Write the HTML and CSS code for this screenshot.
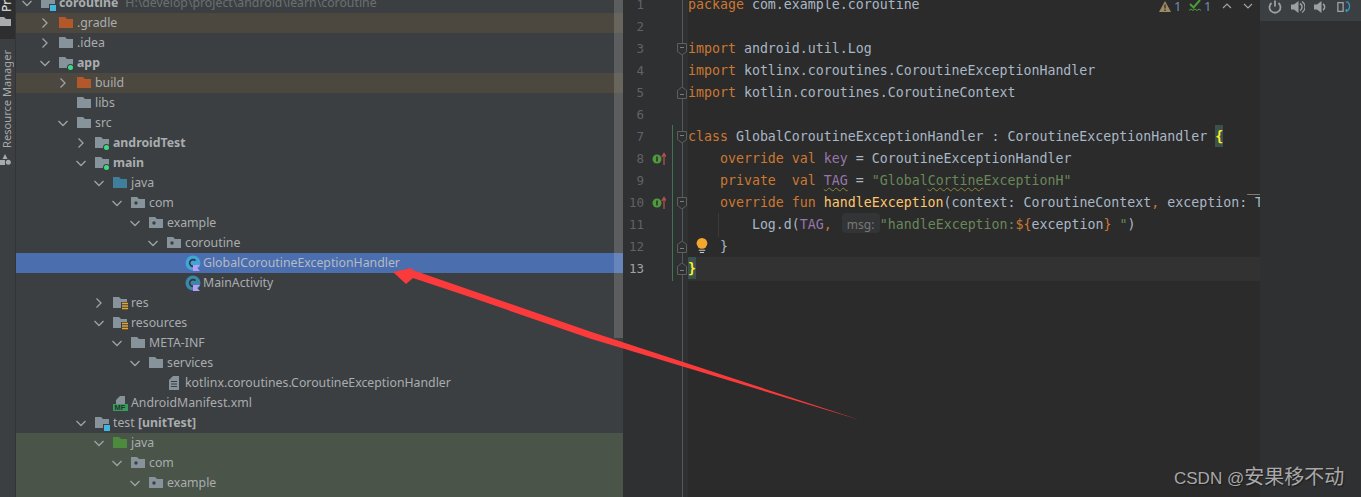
FILE: index.html
```html
<!DOCTYPE html>
<html lang="en">
<head>
<meta charset="utf-8">
<title>Coroutine project</title>
<link rel="stylesheet" href="styles.css">
</head>
<body>
<svg class="defs" aria-hidden="true">
  <symbol id="right" viewBox="0 0 10 10"><path d="M2.5.5 7 5 2.5 9.5" fill="none" stroke="#a0a3a5" stroke-width="1.3"/></symbol>
  <symbol id="down" viewBox="0 0 10 10"><path d="M.5 3 5 7.5 9.5 3" fill="none" stroke="#a0a3a5" stroke-width="1.3"/></symbol>
  <symbol id="folder" viewBox="0 0 16 16"><path d="M0 2h6l2 2h6v9H0z" fill="currentColor"/></symbol>
  <symbol id="module" viewBox="0 0 16 16"><path d="M0 2h6l2 2h6v9H0z" fill="#87939a"/><circle cx="11.5" cy="12.5" r="3.5" fill="#3c3f41"/><circle cx="11.5" cy="12.5" r="2.5" fill="#3ddc84"/></symbol>
  <symbol id="root" viewBox="0 0 16 16"><path d="M0 2h6l2 2h6v9H0z" fill="#87939a"/><path d="M8 9h8v7H8z" fill="#3c3f41"/><path d="M9 10h6v6H9z" fill="#40b6e0"/></symbol>
  <symbol id="package" viewBox="0 0 16 16"><path d="M0 2h6l2 2h6v9H0z" fill="#87939a"/><circle cx="5" cy="8" r="1.7" fill="#3c3f41"/></symbol>
  <symbol id="resfolder" viewBox="0 0 16 16"><path d="M0 2h6l2 2h6v9H0z" fill="#87939a"/><path d="M8 7h8v9H8z" fill="#3c3f41"/><path d="M9 8.500h6M9 11h6M9 13.500h6" stroke="#e8a52c" stroke-width="1.400"/></symbol>
  <symbol id="doc" viewBox="0 0 16 16"><path d="M6 1h6v14H2V5z" fill="#87939a"/><path d="M4 6.500h6M4 9h6M4 11.500h6" stroke="#3c3f41"/></symbol>
  <symbol id="manifest" viewBox="0 0 16 16"><path d="M7 1h5v8H3V5z" fill="#87939a"/><path d="M0 9h15v7H0z" fill="#389a5f"/><text x="1.500" y="15.300" class="mf">MF</text></symbol>
  <symbol id="kclass" viewBox="0 0 16 16"><circle cx="8" cy="8" r="7.500" fill="currentColor"/><path d="M10.500 5.600a3.400 3.400 0 1 0 0 4.800" fill="none" stroke="#2f3a40" stroke-width="1.600"/><path d="M8 10h7l-3 3 3 3H8z" fill="#b99bf8"/></symbol>
  <symbol id="fold-open" viewBox="0 0 10 14"><path d="M.5 1.500h9v8L5 13 .5 9.500z" fill="#2f3032" stroke="#5e6060"/><path d="M3 5.500h4" stroke="#7a7c7e"/></symbol>
  <symbol id="fold-close" viewBox="0 0 10 14"><path d="M.5 12.500h9v-8L5 1 .5 4.500z" fill="#2f3032" stroke="#5e6060"/><path d="M3 8.500h4" stroke="#7a7c7e"/></symbol>
  <symbol id="impl" viewBox="0 0 14 14"><circle cx="5" cy="7" r="4.500" fill="#4e9a3c"/><path d="M5 4.500v5" stroke="#2b2b2b" stroke-width="1.500"/><path d="M12 13V2M9.800 5 12 1.500 14.200 5" fill="none" stroke="#b5524c" stroke-width="1.300"/></symbol>
</svg>

<div class="app">
  <nav class="rail">
    <div class="rail-tab">
      <svg class="rail-folder" viewBox="0 0 11 9"><path d="M0 0h4l2 2h5v7H0z"/></svg>
      <span class="rail-label active">Pr</span>
    </div>
    <div class="rail-item">
      <svg class="rail-res" viewBox="0 0 11 11"><path d="M5 0l2.500 5h-5z"/><path d="M0 6h5v5H0z"/><circle cx="8.300" cy="8.300" r="2.500"/></svg>
      <span class="rail-label">Resource Manager</span>
    </div>
  </nav>

  <section class="tree">
    <div class="tree-rows">
      <div class="row d0"><svg class="chev"><use href="#down"/></svg><svg class="ico"><use href="#root"/></svg><b>coroutine</b><span class="path">H:\develop\project\android\learn\coroutine</span></div>
      <div class="row d1 excluded"><svg class="chev"><use href="#right"/></svg><svg class="ico orange"><use href="#folder"/></svg><span>.gradle</span></div>
      <div class="row d1"><svg class="chev"><use href="#right"/></svg><svg class="ico gray"><use href="#folder"/></svg><span>.idea</span></div>
      <div class="row d1"><svg class="chev"><use href="#down"/></svg><svg class="ico"><use href="#module"/></svg><b>app</b></div>
      <div class="row d2 excluded"><svg class="chev"><use href="#right"/></svg><svg class="ico orange"><use href="#folder"/></svg><span>build</span></div>
      <div class="row d2"><i class="chev"></i><svg class="ico gray"><use href="#folder"/></svg><span>libs</span></div>
      <div class="row d2"><svg class="chev"><use href="#down"/></svg><svg class="ico gray"><use href="#folder"/></svg><span>src</span></div>
      <div class="row d3"><svg class="chev"><use href="#right"/></svg><svg class="ico"><use href="#module"/></svg><b>androidTest</b></div>
      <div class="row d3"><svg class="chev"><use href="#down"/></svg><svg class="ico"><use href="#module"/></svg><b>main</b></div>
      <div class="row d4"><svg class="chev"><use href="#down"/></svg><svg class="ico teal"><use href="#folder"/></svg><span>java</span></div>
      <div class="row d5"><svg class="chev"><use href="#down"/></svg><svg class="ico"><use href="#package"/></svg><span>com</span></div>
      <div class="row d6"><svg class="chev"><use href="#down"/></svg><svg class="ico"><use href="#package"/></svg><span>example</span></div>
      <div class="row d7"><svg class="chev"><use href="#down"/></svg><svg class="ico"><use href="#package"/></svg><span>coroutine</span></div>
      <div class="row d8 selected"><i class="chev"></i><svg class="ico kbright"><use href="#kclass"/></svg><span>GlobalCoroutineExceptionHandler</span></div>
      <div class="row d8"><i class="chev"></i><svg class="ico kdim"><use href="#kclass"/></svg><span>MainActivity</span></div>
      <div class="row d4"><svg class="chev"><use href="#right"/></svg><svg class="ico"><use href="#resfolder"/></svg><span>res</span></div>
      <div class="row d4"><svg class="chev"><use href="#down"/></svg><svg class="ico"><use href="#resfolder"/></svg><span>resources</span></div>
      <div class="row d5"><svg class="chev"><use href="#down"/></svg><svg class="ico gray"><use href="#folder"/></svg><span>META-INF</span></div>
      <div class="row d6"><svg class="chev"><use href="#down"/></svg><svg class="ico gray"><use href="#folder"/></svg><span>services</span></div>
      <div class="row d7"><i class="chev"></i><svg class="ico"><use href="#doc"/></svg><span>kotlinx.coroutines.CoroutineExceptionHandler</span></div>
      <div class="row d4"><i class="chev"></i><svg class="ico"><use href="#manifest"/></svg><span>AndroidManifest.xml</span></div>
      <div class="row d3"><svg class="chev"><use href="#down"/></svg><svg class="ico"><use href="#root"/></svg><span>test <b>[unitTest]</b></span></div>
      <div class="row d4 tests"><svg class="chev"><use href="#down"/></svg><svg class="ico green"><use href="#folder"/></svg><span>java</span></div>
      <div class="row d5 tests"><svg class="chev"><use href="#down"/></svg><svg class="ico"><use href="#package"/></svg><span>com</span></div>
      <div class="row d6 tests"><svg class="chev"><use href="#down"/></svg><svg class="ico"><use href="#package"/></svg><span>example</span></div>
      <div class="row d7 tests"></div>
    </div>
    <div class="scrollbar"></div>
  </section>

  <main class="editor">
    <div class="ln"><span class="num">1</span><span class="marks"></span><span class="fold"></span><code class="code"><span class="kw">package</span> com.example.coroutine</code></div>
    <div class="ln"><span class="num">2</span><span class="marks"></span><span class="fold"></span><code class="code"></code></div>
    <div class="ln"><span class="num">3</span><span class="marks"></span><span class="fold"><svg class="fold-ico"><use href="#fold-open"/></svg></span><code class="code"><span class="kw">import</span> android.util.Log</code></div>
    <div class="ln"><span class="num">4</span><span class="marks"></span><span class="fold"></span><code class="code"><span class="kw">import</span> kotlinx.coroutines.CoroutineExceptionHandler</code></div>
    <div class="ln"><span class="num">5</span><span class="marks"></span><span class="fold"><svg class="fold-ico"><use href="#fold-close"/></svg></span><code class="code"><span class="kw">import</span> kotlin.coroutines.CoroutineContext</code></div>
    <div class="ln"><span class="num">6</span><span class="marks"></span><span class="fold"></span><code class="code"></code></div>
    <div class="ln changed"><span class="num">7</span><span class="marks"></span><span class="fold"><svg class="fold-ico"><use href="#fold-open"/></svg></span><code class="code"><span class="kw">class</span> GlobalCoroutineExceptionHandler : CoroutineExceptionHandler <span class="brace">{</span></code></div>
    <div class="ln changed"><span class="num">8</span><span class="marks"><svg class="impl"><use href="#impl"/></svg></span><span class="fold"></span><code class="code">    <span class="kw">override val</span> <span class="prop">key</span> = CoroutineExceptionHandler</code></div>
    <div class="ln changed"><span class="num">9</span><span class="marks"></span><span class="fold"></span><code class="code">    <span class="kw">private  val</span> <span class="prop wavy">TAG</span> = <span class="str">"Global<span class="wavy">Cortine</span>ExceptionH"</span></code></div>
    <div class="ln changed"><span class="num">10</span><span class="marks"><svg class="impl"><use href="#impl"/></svg></span><span class="fold"><svg class="fold-ico"><use href="#fold-open"/></svg></span><code class="code">    <span class="kw">override fun</span> <span class="fn">handleException</span>(context: CoroutineContext<span class="kw">,</span> exception:<span class="over"> Throwable</span>) {</code></div>
    <div class="ln changed"><span class="num">11</span><span class="marks"></span><span class="fold"></span><code class="code guide">        Log.d(<span class="prop">TAG</span><span class="kw">,</span> <span class="hint">msg:</span><span class="str">"handleException:<span class="kw">${</span></span>exception<span class="kw">}</span> <span class="str">"</span>)</code></div>
    <div class="ln changed"><span class="num">12</span><span class="marks"></span><span class="fold"><svg class="fold-ico"><use href="#fold-close"/></svg></span><code class="code bulb-line">    }<svg class="bulb" viewBox="0 0 12 14"><circle cx="5.500" cy="5" r="5" fill="#f2a72e"/><path d="M2.500 11.500h6M3.500 13.500h4" stroke="#c9cbcd"/></svg></code></div>
    <div class="ln changed current"><span class="num">13</span><span class="marks"></span><span class="fold"><svg class="fold-ico"><use href="#fold-close"/></svg></span><code class="code"><span class="brace">}</span></code></div>

    <div class="inspections">
      <svg class="insp-ico" viewBox="0 0 12 11"><path d="M6 0l6 11H0z" fill="#9c8a63"/><path d="M6 3.500v4M6 8.500v1.500" stroke="#2b2b2b" stroke-width="1.300"/></svg>
      <span class="insp-count">1</span>
      <svg class="insp-ico check" viewBox="0 0 12 12"><path d="M1 4l3.500 3.500L11 0" fill="none" stroke="#4e9a3c" stroke-width="2"/><path d="M0 10.500l2-1.500 2 1.500 2-1.500 2 1.500 2-1.500 2 1.500" fill="none" stroke="#4e9a3c"/></svg>
      <span class="insp-count">1</span>
      <svg class="insp-chev up" viewBox="0 0 10 6"><path d="M1 5l4-4 4 4" fill="none" stroke="#a0a3a5" stroke-width="1.200"/></svg>
      <svg class="insp-chev" viewBox="0 0 10 6"><path d="M1 1l4 4 4-4" fill="none" stroke="#a0a3a5" stroke-width="1.200"/></svg>
    </div>
  </main>

  <aside class="side">
    <div class="device-bar">
      <svg class="dev-ico" viewBox="0 0 14 14"><path d="M3.500 3a5.500 5.500 0 1 0 7 0M7 .5v6" fill="none" stroke="#9da0a2" stroke-width="1.800"/></svg>
      <svg class="dev-ico" viewBox="0 0 14 14"><path d="M0 4.500h3L7.500 1v12L3 9.500H0z" fill="#9da0a2"/><path d="M9 3.500a4 4 0 0 1 0 7" fill="none" stroke="#9da0a2" stroke-width="1.500"/><path d="M11 1.500a6.500 6.500 0 0 1 0 11" fill="none" stroke="#9da0a2" stroke-width="1.200"/></svg>
      <svg class="dev-ico" viewBox="0 0 14 14"><path d="M0 4.500h3L7.500 1v12L3 9.500H0z" fill="#9da0a2"/><path d="M9 4a3.500 3.500 0 0 1 0 6" fill="none" stroke="#9da0a2" stroke-width="1.500"/></svg>
      <svg class="dev-ico" viewBox="0 0 16 14"><rect x="1" y="2" width="6" height="10" fill="none" stroke="#9da0a2" stroke-width="1.500"/><path d="M10 1.500h2.500c2.500 2.500 2.500 7 0 9.500H10M11.500 9.500 10 11l1.500 1.500" fill="none" stroke="#3592c4" stroke-width="1.500"/></svg>
    </div>
  </aside>

  <svg class="arrow" viewBox="0 0 1361 497" aria-hidden="true"><path d="M393 272 412 268 412.500 270 590 331.500 860 420 590 338.500 470 297 413 278 406 284z" fill="#fb3b3b"/></svg>
  <div class="watermark">CSDN @<span class="wm-cjk">安果移不动</span></div>
</div>
</body>
</html>
```
FILE: styles.css
```css
* { box-sizing: border-box; }
html, body { margin: 0; height: 100%; background: #2f3032; }
.defs { position: absolute; width: 0; height: 0; }
.mf { font: bold 7.5px "Liberation Sans", sans-serif; fill: #24342a; }

.app {
  position: relative;
  display: flex;
  width: 1361px;
  height: 497px;
  overflow: hidden;
}

/* left tool-window rail */
.rail {
  flex: 0 0 16px;
  display: flex;
  flex-direction: column;
  background: #3c3f41;
  border-right: 1px solid #323436;
  color: #a7a9ab;
  font: 11.1px "Noto Sans", sans-serif;
}
.rail-tab {
  height: 39px;
  background: #2c2e2f;
  display: flex;
  flex-direction: column-reverse;
  justify-content: flex-end;
}
.rail-label {
  writing-mode: vertical-rl;
  transform: rotate(180deg);
  line-height: 13px;
  white-space: nowrap;
  width: 14px;
}
.rail-label.active { color: #e6e6e6; height: 13px; margin-top: -1px; font-size: 12px; }
.rail-folder { width: 11px; height: 9px; margin-top: 5px; fill: #a9abad; }
.rail-item {
  display: flex;
  flex-direction: column-reverse;
  align-items: flex-start;
  padding-top: 11px;
}
.rail-res { width: 11px; height: 11px; margin-top: 6px; fill: #a7a9ab; }

/* project tree */
.tree {
  position: relative;
  flex: 0 0 607px;
  background: #3c3f41;
  overflow: hidden;
}
.tree-rows { margin-top: -7px; }
.row {
  display: flex;
  align-items: center;
  height: 20px;
  color: #a9adb0;
  font: 12.3px/20px "Noto Sans", sans-serif;
  white-space: nowrap;
}
.row b { font-weight: 700; }
.path { margin-left: 7px; color: #6b6f72; }
.chev { display: block; flex: none; width: 10px; height: 10px; margin-right: 9px; }
.ico { flex: none; width: 16px; height: 16px; margin-right: 2px; }
.d0 { padding-left: 6px; }
.d1 { padding-left: 24px; }
.d2 { padding-left: 42px; }
.d3 { padding-left: 60px; }
.d4 { padding-left: 78px; }
.d5 { padding-left: 96px; }
.d6 { padding-left: 114px; }
.d7 { padding-left: 132px; }
.d8 { padding-left: 150px; }
.excluded { background: #4c483f; }
.tests { background: #4b5449; }
.selected { background: #4b6eaf; color: #b4bac4; }
.orange { color: #b3582b; }
.gray { color: #87939a; }
.teal { color: #3f7f9c; }
.green { color: #4c8a3e; }
.kbright { color: #40a6d8; }
.kdim { color: #3b88a8; }
.scrollbar {
  position: absolute;
  top: 0;
  right: 0;
  width: 9px;
  height: 338px;
  background: rgba(255, 255, 255, .16);
}

/* editor */
.editor {
  position: relative;
  flex: 0 0 637px;
  background:
    linear-gradient(#555759, #555759) 59px 0 / 1px 100% no-repeat,
    linear-gradient(#2f3032, #2f3032) 0 0 / 65px 100% no-repeat,
    #2b2b2b;
  overflow: hidden;
}
.ln {
  display: grid;
  grid-template-columns: 21px 28px 16px 1fr;
  height: 22px;
  align-items: stretch;
}
.ln:first-child { margin-top: -7px; }
.num {
  color: #606366;
  font: 12.5px/24px "DejaVu Sans Mono", monospace;
  text-align: right;
}
.marks { display: flex; align-items: center; padding-left: 8px; }
.impl { width: 14px; height: 14px; overflow: visible; }
.fold { display: flex; align-items: center; padding-left: 5px; }
.changed .fold { border-left: 1px solid #447152; padding-left: 4px; }
.fold-ico { width: 10px; height: 14px; }
.code {
  position: relative;
  min-width: 0;
  color: #a9b7c6;
  font: 13.28px/24px "DejaVu Sans Mono", monospace;
  white-space: pre;
  overflow: hidden;
}
.current .num { color: #a4a3a3; }
.current .code { background: #323232; }
.kw { color: #cc7832; }
.str { color: #6a8759; }
.prop { color: #9876aa; }
.fn { color: #ffc66d; }
.wavy { text-decoration: underline wavy #8a8a3c 1px; text-underline-offset: 2px; }
.over { text-decoration: overline #85796a; }
.brace { display: inline-block; height: 22px; background: #3b514d; color: #ffef28; font-weight: 700; }
.hint {
  display: inline-block;
  width: 38px;
  height: 20px;
  margin-left: 2px;
  padding-left: 5px;
  border-radius: 4px;
  background: #333435;
  color: #787878;
  font: 12px/24px "Noto Sans", sans-serif;
}
.guide { background: linear-gradient(#3b3b3b, #3b3b3b) 30px 0 / 1px 100% no-repeat; }
.bulb {
  position: absolute;
  left: 8px;
  top: 3px;
  width: 13px;
  height: 15px;
}

/* inspections widget */
.inspections {
  position: absolute;
  top: 0;
  right: 7px;
  display: flex;
  align-items: center;
  height: 12px;
  color: #6f8fb0;
  font: 13px/12px "Noto Sans", sans-serif;
}
.insp-ico { width: 12px; height: 11px; }
.insp-count { width: 18px; padding-left: 3px; }
.check { height: 12px; }
.insp-chev { width: 10px; height: 6px; }
.insp-chev.up { margin: 0 11px 0 3px; }

/* right side */
.side { flex: 1; background: #2f3032; }
.device-bar {
  display: flex;
  align-items: center;
  gap: 9px;
  height: 21px;
  padding: 0 8px;
  background: #3c3f41;
}
.dev-ico { width: 14px; height: 14px; margin-top: -8px; }

/* overlays */
.arrow {
  position: absolute;
  inset: 0;
  width: 1361px;
  height: 497px;
  pointer-events: none;
}
.watermark {
  position: absolute;
  left: 1174px;
  top: 463px;
  color: #a8a8a8;
  font: 17px/26px "Liberation Sans", "Noto Sans CJK SC", sans-serif;
  text-shadow: 1px 1px 1px #1c1c1c;
  white-space: nowrap;
}
.wm-cjk { font: 20px/26px "Noto Sans CJK SC", sans-serif; }
```
